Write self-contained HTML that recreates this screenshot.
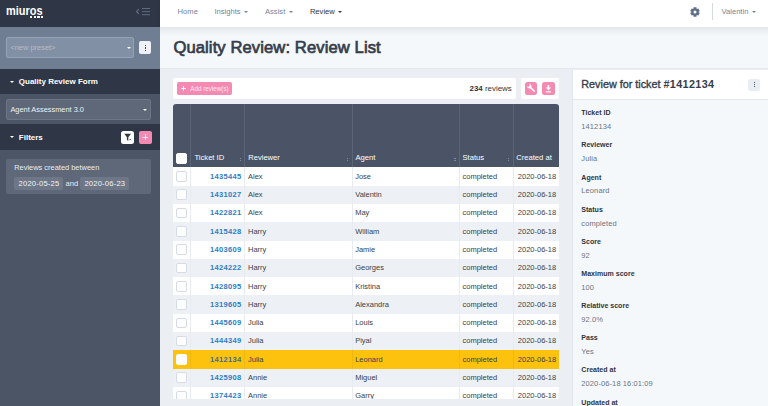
<!DOCTYPE html>
<html><head><meta charset="utf-8">
<style>
*{box-sizing:border-box;margin:0;padding:0}
html,body{width:768px;height:406px;overflow:hidden;font-family:"Liberation Sans",sans-serif;background:#ebeff3}
.abs{position:absolute}
#sb{position:absolute;left:0;top:0;width:160px;height:406px;background:#4b5566}
#sbh{position:absolute;left:0;top:0;width:160px;height:26.5px;background:#2f3747}
#preset{position:absolute;left:0;top:26.5px;width:160px;height:42px;background:#707e94}
.sec{position:absolute;left:0;width:160px;background:#2f3747;color:#fff;font-weight:bold;font-size:8.0px}
.caret{position:absolute;width:0;height:0;border-left:2.2px solid transparent;border-right:2.2px solid transparent;border-top:2.5px solid #fff}
#nav{position:absolute;left:160px;top:0;width:608px;height:26.5px;background:#fff;box-shadow:0 1px 3px rgba(0,0,0,.08)}
.nv{position:absolute;top:7px;font-size:7.6px;color:#77839a;white-space:nowrap}
#title{position:absolute;left:160px;top:26.5px;width:608px;height:42px;background:#f5f8fb;border-bottom:1px solid #e3e8ee}
#tb{position:absolute;left:173px;top:78px;width:342.6px;height:21px;background:#fff;border-radius:2px}
#tb2{position:absolute;left:520.6px;top:78px;width:38px;height:21px;background:#fff;border-radius:2px}
.pk{position:absolute;background:#f48ab2;border-radius:2px}
#tbl{position:absolute;left:173px;top:103.5px;width:385.8px;height:295.5px;overflow:hidden;border-radius:3px 3px 2px 2px;background:#fff}
#th{position:absolute;left:0;top:0;width:100%;height:63.9px;background:#4a5466}
.row{position:absolute;left:0;width:100%;height:18.25px;font-size:7.5px;color:#3a3f48}
.row span{position:absolute;top:4.4px;white-space:nowrap}
.vd{position:absolute;top:0;width:1px;height:100%;background:rgba(180,190,205,.35)}
.cb{position:absolute;left:3.3px;top:3.8px;width:10.6px;height:10.6px;border:1px solid #d6dce4;border-radius:2px;background:#fff}
.hh{position:absolute;top:49.5px;font-size:7.6px;color:#fff;white-space:nowrap}
.sort{position:absolute;top:54.3px;width:1.2px;height:3.4px;border-top:1.2px solid #7d889b;border-bottom:1.2px solid #7d889b}
#rp{position:absolute;left:572.5px;top:69.6px;width:195.5px;height:337px;background:#f5f8fb;box-shadow:-1px 0 0 #e1e6ec}
#rph{position:absolute;left:0;top:0;width:100%;height:30.3px;background:#fff;border-bottom:1px solid #e4e9ef}
.fl{position:absolute;left:8.8px;font-size:7.05px;font-weight:bold;color:#2f3540;white-space:nowrap}
.fv{position:absolute;left:8.8px;font-size:7.5px;letter-spacing:0.1px;color:#6b7483;white-space:nowrap}
</style></head><body>
<div id="sb">
  <div id="sbh">
    <div class="abs" style="left:5.9px;top:3.1px;font-size:13.4px;font-weight:bold;color:#fff;letter-spacing:0px;transform-origin:0 0;transform:scaleX(0.82)">miuros</div>
    <div class="abs" style="left:29.5px;top:15.8px;width:13.6px;height:2.5px;background:repeating-linear-gradient(90deg,#f4f5f7 0 2.4px,transparent 2.4px 3.7px)"></div>
    <svg class="abs" style="left:134px;top:7px" width="8" height="10" viewBox="0 0 8 10"><path fill="none" stroke="#5f6a80" stroke-width="1.2" d="M4.9,2.2 L2.5,4.6 L4.9,7"/></svg>
    <div class="abs" style="left:142px;top:8px;width:7.6px;height:1.1px;background:#5f6a80;box-shadow:0 3.1px 0 #5f6a80,0 6.2px 0 #5f6a80"></div>
  </div>
  <div id="preset">
    <div class="abs" style="left:6.2px;top:10.5px;width:128px;height:21.2px;background:#8290a6;border:1px solid #95a1b4;border-radius:2px"></div>
    <div class="abs" style="left:10.4px;top:16.5px;font-size:7.45px;color:#b4bdcb">&lt;new preset&gt;</div>
    <div class="caret" style="left:126.6px;top:20px"></div>
    <div class="abs" style="left:138.8px;top:14.5px;width:12.7px;height:13.2px;background:#eef2f6;border-radius:2px"></div>
    <div class="abs" style="left:144.5px;top:18px;width:1.6px;height:6px;background:repeating-linear-gradient(180deg,#3a4250 0 1.4px,transparent 1.4px 2.3px)"></div>
  </div>
  <div class="sec" style="top:68.5px;height:25.7px">
    <div class="caret" style="left:9.8px;top:12px"></div>
    <div class="abs" style="left:18.8px;top:8.5px">Quality Review Form</div>
  </div>
  <div class="abs" style="left:6.2px;top:98.7px;width:145.3px;height:21.2px;background:#5e6878;border:1px solid #6b7585;border-radius:2px"></div>
  <div class="abs" style="left:10.4px;top:105px;font-size:7.4px;color:#eef1f5">Agent Assessment 3.0</div>
  <div class="caret" style="left:143px;top:108.5px"></div>
  <div class="sec" style="top:124.4px;height:25.8px">
    <div class="caret" style="left:9.8px;top:12px"></div>
    <div class="abs" style="left:18.8px;top:8.5px">Filters</div>
    <div class="abs" style="left:121.2px;top:6.5px;width:13px;height:13px;background:#fff;border-radius:2.5px"></div><svg class="abs" style="left:121.2px;top:6.5px" width="13" height="13" viewBox="0 0 13 13"><path fill="#2f3747" d="M3.3,2.7 H10 L7.3,6.2 V9.8 L5.9,9 V6.2Z"/><path stroke="#2f3747" stroke-width="0.7" d="M8.6,7.9 L9.9,9.2 M9.9,7.9 L8.6,9.2"/></svg>
    <div class="pk" style="left:138.6px;top:6.6px;width:13px;height:12.9px"></div>
    <div class="abs" style="left:142px;top:12.3px;width:6px;height:1px;background:rgba(255,255,255,.75)"></div>
    <div class="abs" style="left:144.5px;top:9.8px;width:1px;height:6px;background:rgba(255,255,255,.75)"></div>
  </div>
  <div class="abs" style="left:6.3px;top:159px;width:145px;height:35px;background:#5e6878;border-radius:2px"></div>
  <div class="abs" style="left:14.2px;top:162.6px;font-size:7.45px;color:#e8ecf1">Reviews created between</div>
  <div class="abs" style="left:14.2px;top:177.2px;width:49px;height:12.6px;background:#6d7788;border-radius:2px"></div>
  <div class="abs" style="left:18.6px;top:178.8px;font-size:7.6px;letter-spacing:0.2px;color:#f2f4f7">2020-05-25</div>
  <div class="abs" style="left:65.5px;top:178.8px;font-size:7.6px;color:#e8ecf1">and</div>
  <div class="abs" style="left:80.2px;top:177.2px;width:48.6px;height:12.6px;background:#6d7788;border-radius:2px"></div>
  <div class="abs" style="left:84.4px;top:178.8px;font-size:7.6px;letter-spacing:0.2px;color:#f2f4f7">2020-06-23</div>
</div>

<div id="nav">
  <div class="nv" style="left:17.6px">Home</div>
  <div class="nv" style="left:54.4px">Insights</div>
  <div class="caret" style="left:84.4px;top:11px;border-top-color:#77839a"></div>
  <div class="nv" style="left:105px">Assist</div>
  <div class="caret" style="left:129.4px;top:11px;border-top-color:#77839a"></div>
  <div class="nv" style="left:149.9px;color:#2f3540">Review</div>
  <div class="caret" style="left:178.1px;top:11px;border-top-color:#2f3540"></div>
  <svg class="abs" style="left:530.1px;top:6.6px" width="10" height="10" viewBox="0 0 10 10"><path fill-rule="evenodd" fill="#5f6f8a" d="M3.31,2.05 L3.55,0.32 L6.45,0.32 L6.69,2.05 L6.71,2.06 L8.33,1.41 L9.78,3.91 L8.40,4.99 L8.40,5.01 L9.78,6.09 L8.33,8.59 L6.71,7.94 L6.69,7.95 L6.45,9.68 L3.55,9.68 L3.31,7.95 L3.29,7.94 L1.67,8.59 L0.22,6.09 L1.60,5.01 L1.60,4.99 L0.22,3.91 L1.67,1.41 L3.29,2.06Z M5,3.5 A1.5,1.5 0 1,0 5,6.5 A1.5,1.5 0 1,0 5,3.5Z"/></svg>
  <div class="abs" style="left:552.4px;top:3.2px;width:1px;height:17px;background:#d5dae2"></div>
  <div class="nv" style="left:561.5px">Valentin</div>
  <div class="caret" style="left:592.4px;top:11px;border-top-color:#77839a"></div>
</div>

<div id="title">
  <div class="abs" style="left:0;top:0;width:100%;height:9px;background:linear-gradient(#e4e8ec,rgba(244,247,250,0))"></div>
  <div class="abs" style="left:13.4px;top:11.6px;font-size:16.6px;font-weight:normal;-webkit-text-stroke:0.7px #353d4b;letter-spacing:0.1px;color:#353d4b;white-space:nowrap">Quality Review: Review List</div>
</div>

<div id="tb">
  <div class="pk" style="left:4.2px;top:4px;width:55.1px;height:13px"></div>
  <div class="abs" style="left:17.2px;top:7px;font-size:6.3px;color:rgba(255,255,255,.85);white-space:nowrap">Add review(s)</div>
  <div class="abs" style="left:8.1px;top:10.1px;width:4.8px;height:0.9px;background:rgba(255,255,255,.9)"></div><div class="abs" style="left:10.05px;top:8.2px;width:0.9px;height:4.8px;background:rgba(255,255,255,.9)"></div>
  <div class="abs" style="right:3.9px;top:6px;font-size:7.9px;color:#2f3540;white-space:nowrap"><b>234</b> reviews</div>
</div>
<div id="tb2">
  <div class="pk" style="left:4.3px;top:4px;width:12.6px;height:12.6px;border-radius:2.5px"></div>
  <div class="pk" style="left:21.4px;top:4px;width:12.6px;height:12.6px;border-radius:2.5px"></div>
  <svg class="abs" style="left:4.3px;top:4px" width="12.6" height="12.6" viewBox="0 0 12.6 12.6"><path fill="none" stroke="#fff" stroke-width="1.5" stroke-linecap="round" d="M4.6,4.6 L9.3,9.3"/><path fill="none" stroke="#fff" stroke-width="1.3" d="M4.44,2.71 A1.6,1.6 0 1,1 2.71,4.44"/></svg>
  <svg class="abs" style="left:21.4px;top:4px" width="12.6" height="12.6" viewBox="0 0 12.6 12.6"><path fill="#fff" d="M5.6,2.9 H7.2 V5.6 H8.9 L6.4,8.4 L3.9,5.6 H5.6Z"/><rect fill="#fff" x="3.8" y="9.3" width="5.2" height="1.1"/></svg>
</div>

<div id="tbl">
  <div id="th">
    <div class="cb" style="top:49.5px;border-color:#fff"></div>
    <div class="vd" style="left:17.2px;background:#5a6577"></div>
    <div class="vd" style="left:71.2px;background:#5a6577"></div>
    <div class="vd" style="left:178.5px;background:#5a6577"></div>
    <div class="vd" style="left:286px;background:#5a6577"></div>
    <div class="vd" style="left:339.5px;background:#5a6577"></div>
    <div class="sort" style="left:66.6px"></div>
    <div class="sort" style="left:173.9px"></div>
    <div class="sort" style="left:281.4px"></div>
    <div class="sort" style="left:334.9px"></div>
    <div class="hh" style="left:21.5px">Ticket ID</div>
    <div class="hh" style="left:75.2px">Reviewer</div>
    <div class="hh" style="left:182.5px">Agent</div>
    <div class="hh" style="left:289.5px">Status</div>
    <div class="hh" style="left:343.3px">Created at</div>
  </div>
  <div class="row" style="top:63.90px;background:#fff">
<div class="cb"></div>
<span style="right:317.4px;color:#2f7cc5;font-weight:bold;letter-spacing:0.3px">1435445</span>
<span style="left:75px">Alex</span>
<span style="left:182.2px">Jose</span>
<span style="left:289.5px">completed</span>
<span style="left:344.8px">2020-06-18</span>
<div class="vd" style="left:17.2px;background:#e8ecf1"></div>
<div class="vd" style="left:71.2px;background:#e8ecf1"></div>
<div class="vd" style="left:178.5px;background:#e8ecf1"></div>
<div class="vd" style="left:286px;background:#e8ecf1"></div>
<div class="vd" style="left:339.5px;background:#e8ecf1"></div>
</div>
<div class="row" style="top:82.19px;background:#edf1f5">
<div class="cb"></div>
<span style="right:317.4px;color:#2f7cc5;font-weight:bold;letter-spacing:0.3px">1431027</span>
<span style="left:75px">Alex</span>
<span style="left:182.2px">Valentin</span>
<span style="left:289.5px">completed</span>
<span style="left:344.8px">2020-06-18</span>
<div class="vd" style="left:17.2px;background:#e8ecf1"></div>
<div class="vd" style="left:71.2px;background:#e8ecf1"></div>
<div class="vd" style="left:178.5px;background:#e8ecf1"></div>
<div class="vd" style="left:286px;background:#e8ecf1"></div>
<div class="vd" style="left:339.5px;background:#e8ecf1"></div>
</div>
<div class="row" style="top:100.48px;background:#fff">
<div class="cb"></div>
<span style="right:317.4px;color:#2f7cc5;font-weight:bold;letter-spacing:0.3px">1422821</span>
<span style="left:75px">Alex</span>
<span style="left:182.2px">May</span>
<span style="left:289.5px">completed</span>
<span style="left:344.8px">2020-06-18</span>
<div class="vd" style="left:17.2px;background:#e8ecf1"></div>
<div class="vd" style="left:71.2px;background:#e8ecf1"></div>
<div class="vd" style="left:178.5px;background:#e8ecf1"></div>
<div class="vd" style="left:286px;background:#e8ecf1"></div>
<div class="vd" style="left:339.5px;background:#e8ecf1"></div>
</div>
<div class="row" style="top:118.77px;background:#edf1f5">
<div class="cb"></div>
<span style="right:317.4px;color:#2f7cc5;font-weight:bold;letter-spacing:0.3px">1415428</span>
<span style="left:75px">Harry</span>
<span style="left:182.2px">William</span>
<span style="left:289.5px">completed</span>
<span style="left:344.8px">2020-06-18</span>
<div class="vd" style="left:17.2px;background:#e8ecf1"></div>
<div class="vd" style="left:71.2px;background:#e8ecf1"></div>
<div class="vd" style="left:178.5px;background:#e8ecf1"></div>
<div class="vd" style="left:286px;background:#e8ecf1"></div>
<div class="vd" style="left:339.5px;background:#e8ecf1"></div>
</div>
<div class="row" style="top:137.06px;background:#fff">
<div class="cb"></div>
<span style="right:317.4px;color:#2f7cc5;font-weight:bold;letter-spacing:0.3px">1403609</span>
<span style="left:75px">Harry</span>
<span style="left:182.2px">Jamie</span>
<span style="left:289.5px">completed</span>
<span style="left:344.8px">2020-06-18</span>
<div class="vd" style="left:17.2px;background:#e8ecf1"></div>
<div class="vd" style="left:71.2px;background:#e8ecf1"></div>
<div class="vd" style="left:178.5px;background:#e8ecf1"></div>
<div class="vd" style="left:286px;background:#e8ecf1"></div>
<div class="vd" style="left:339.5px;background:#e8ecf1"></div>
</div>
<div class="row" style="top:155.35px;background:#edf1f5">
<div class="cb"></div>
<span style="right:317.4px;color:#2f7cc5;font-weight:bold;letter-spacing:0.3px">1424222</span>
<span style="left:75px">Harry</span>
<span style="left:182.2px">Georges</span>
<span style="left:289.5px">completed</span>
<span style="left:344.8px">2020-06-18</span>
<div class="vd" style="left:17.2px;background:#e8ecf1"></div>
<div class="vd" style="left:71.2px;background:#e8ecf1"></div>
<div class="vd" style="left:178.5px;background:#e8ecf1"></div>
<div class="vd" style="left:286px;background:#e8ecf1"></div>
<div class="vd" style="left:339.5px;background:#e8ecf1"></div>
</div>
<div class="row" style="top:173.64px;background:#fff">
<div class="cb"></div>
<span style="right:317.4px;color:#2f7cc5;font-weight:bold;letter-spacing:0.3px">1428095</span>
<span style="left:75px">Harry</span>
<span style="left:182.2px">Kristina</span>
<span style="left:289.5px">completed</span>
<span style="left:344.8px">2020-06-18</span>
<div class="vd" style="left:17.2px;background:#e8ecf1"></div>
<div class="vd" style="left:71.2px;background:#e8ecf1"></div>
<div class="vd" style="left:178.5px;background:#e8ecf1"></div>
<div class="vd" style="left:286px;background:#e8ecf1"></div>
<div class="vd" style="left:339.5px;background:#e8ecf1"></div>
</div>
<div class="row" style="top:191.93px;background:#edf1f5">
<div class="cb"></div>
<span style="right:317.4px;color:#2f7cc5;font-weight:bold;letter-spacing:0.3px">1319605</span>
<span style="left:75px">Harry</span>
<span style="left:182.2px">Alexandra</span>
<span style="left:289.5px">completed</span>
<span style="left:344.8px">2020-06-18</span>
<div class="vd" style="left:17.2px;background:#e8ecf1"></div>
<div class="vd" style="left:71.2px;background:#e8ecf1"></div>
<div class="vd" style="left:178.5px;background:#e8ecf1"></div>
<div class="vd" style="left:286px;background:#e8ecf1"></div>
<div class="vd" style="left:339.5px;background:#e8ecf1"></div>
</div>
<div class="row" style="top:210.22px;background:#fff">
<div class="cb"></div>
<span style="right:317.4px;color:#2f7cc5;font-weight:bold;letter-spacing:0.3px">1445609</span>
<span style="left:75px">Julia</span>
<span style="left:182.2px">Louis</span>
<span style="left:289.5px">completed</span>
<span style="left:344.8px">2020-06-18</span>
<div class="vd" style="left:17.2px;background:#e8ecf1"></div>
<div class="vd" style="left:71.2px;background:#e8ecf1"></div>
<div class="vd" style="left:178.5px;background:#e8ecf1"></div>
<div class="vd" style="left:286px;background:#e8ecf1"></div>
<div class="vd" style="left:339.5px;background:#e8ecf1"></div>
</div>
<div class="row" style="top:228.51px;background:#edf1f5">
<div class="cb"></div>
<span style="right:317.4px;color:#2f7cc5;font-weight:bold;letter-spacing:0.3px">1444349</span>
<span style="left:75px">Julia</span>
<span style="left:182.2px">Piyal</span>
<span style="left:289.5px">completed</span>
<span style="left:344.8px">2020-06-18</span>
<div class="vd" style="left:17.2px;background:#e8ecf1"></div>
<div class="vd" style="left:71.2px;background:#e8ecf1"></div>
<div class="vd" style="left:178.5px;background:#e8ecf1"></div>
<div class="vd" style="left:286px;background:#e8ecf1"></div>
<div class="vd" style="left:339.5px;background:#e8ecf1"></div>
</div>
<div class="row" style="top:246.80px;background:#fdc20e">
<div class="cb" style="border-color:#fff"></div>
<span style="right:317.4px;color:#3f6d94;font-weight:bold;letter-spacing:0.3px">1412134</span>
<span style="left:75px">Julia</span>
<span style="left:182.2px">Leonard</span>
<span style="left:289.5px">completed</span>
<span style="left:344.8px">2020-06-18</span>
<div class="vd" style="left:17.2px;background:rgba(0,0,0,.05)"></div>
<div class="vd" style="left:71.2px;background:rgba(0,0,0,.05)"></div>
<div class="vd" style="left:178.5px;background:rgba(0,0,0,.05)"></div>
<div class="vd" style="left:286px;background:rgba(0,0,0,.05)"></div>
<div class="vd" style="left:339.5px;background:rgba(0,0,0,.05)"></div>
</div>
<div class="row" style="top:265.09px;background:#edf1f5">
<div class="cb"></div>
<span style="right:317.4px;color:#2f7cc5;font-weight:bold;letter-spacing:0.3px">1425908</span>
<span style="left:75px">Annie</span>
<span style="left:182.2px">Miguel</span>
<span style="left:289.5px">completed</span>
<span style="left:344.8px">2020-06-18</span>
<div class="vd" style="left:17.2px;background:#e8ecf1"></div>
<div class="vd" style="left:71.2px;background:#e8ecf1"></div>
<div class="vd" style="left:178.5px;background:#e8ecf1"></div>
<div class="vd" style="left:286px;background:#e8ecf1"></div>
<div class="vd" style="left:339.5px;background:#e8ecf1"></div>
</div>
<div class="row" style="top:283.38px;background:#fff">
<div class="cb"></div>
<span style="right:317.4px;color:#2f7cc5;font-weight:bold;letter-spacing:0.3px">1374423</span>
<span style="left:75px">Annie</span>
<span style="left:182.2px">Garry</span>
<span style="left:289.5px">completed</span>
<span style="left:344.8px">2020-06-18</span>
<div class="vd" style="left:17.2px;background:#e8ecf1"></div>
<div class="vd" style="left:71.2px;background:#e8ecf1"></div>
<div class="vd" style="left:178.5px;background:#e8ecf1"></div>
<div class="vd" style="left:286px;background:#e8ecf1"></div>
<div class="vd" style="left:339.5px;background:#e8ecf1"></div>
</div>
</div>

<div id="rp">
  <div id="rph">
    <div class="abs" style="left:8.8px;top:8.5px;font-size:10.8px;color:#353d4b;-webkit-text-stroke:0.35px #353d4b;white-space:nowrap">Review for ticket <b style="-webkit-text-stroke:0;letter-spacing:0.35px">#1412134</b></div>
    <div class="abs" style="left:175.7px;top:9px;width:12.2px;height:12.3px;background:#e9eef3;border-radius:2px"></div><div class="abs" style="left:181.1px;top:12.6px;width:1.4px;height:5.2px;background:repeating-linear-gradient(180deg,#4a5262 0 1.2px,transparent 1.2px 2px)"></div>
  </div>
<div class="fl" style="top:39.70px">Ticket ID</div>
<div class="fv" style="top:52.50px">1412134</div>
<div class="fl" style="top:71.85px">Reviewer</div>
<div class="fv" style="top:84.65px">Julia</div>
<div class="fl" style="top:104.00px">Agent</div>
<div class="fv" style="top:116.80px">Leonard</div>
<div class="fl" style="top:136.15px">Status</div>
<div class="fv" style="top:148.95px">completed</div>
<div class="fl" style="top:168.30px">Score</div>
<div class="fv" style="top:181.10px">92</div>
<div class="fl" style="top:200.45px">Maximum score</div>
<div class="fv" style="top:213.25px">100</div>
<div class="fl" style="top:232.60px">Relative score</div>
<div class="fv" style="top:245.40px">92.0%</div>
<div class="fl" style="top:264.75px">Pass</div>
<div class="fv" style="top:277.55px">Yes</div>
<div class="fl" style="top:296.90px">Created at</div>
<div class="fv" style="top:309.70px">2020-06-18 16:01:09</div>
<div class="fl" style="top:329.05px">Updated at</div>
</div>
</body></html>
